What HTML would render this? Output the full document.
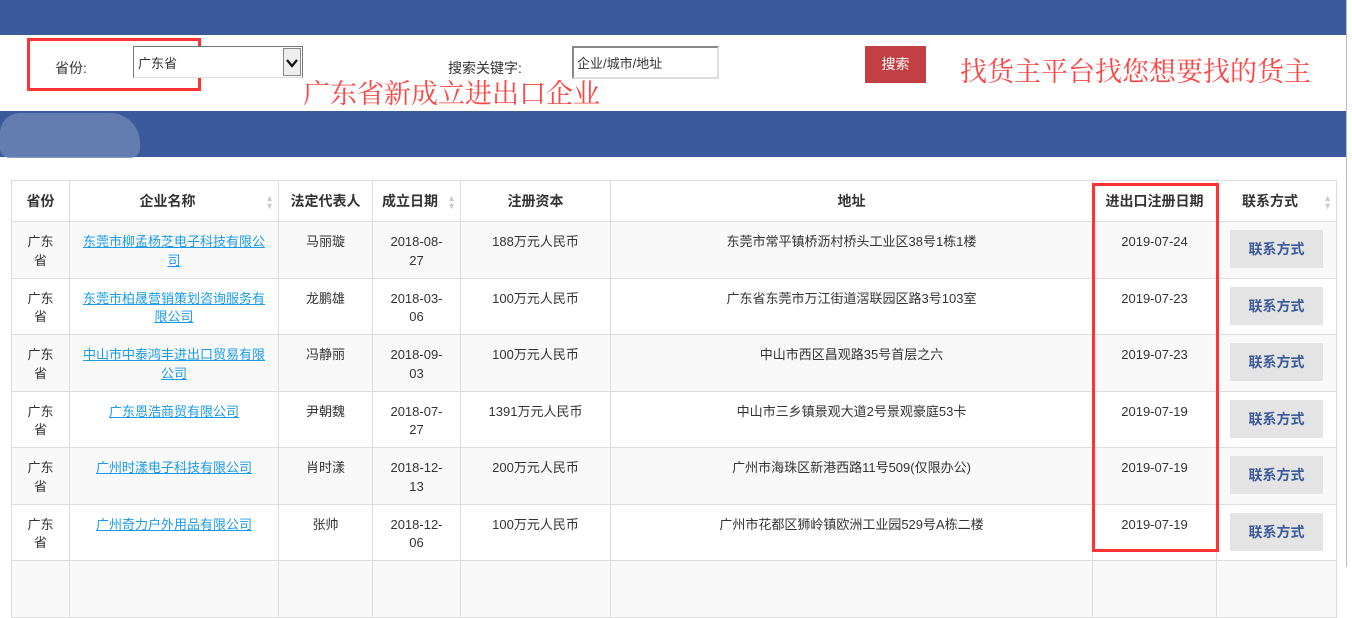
<!DOCTYPE html>
<html><head><meta charset="utf-8"><style>
*{margin:0;padding:0;box-sizing:border-box}
body{width:1352px;height:567px;overflow:hidden;background:#fff;font-family:"Liberation Sans","Noto Sans CJK SC",sans-serif;font-size:13px;color:#333;position:relative}
.abs{position:absolute}
.top{left:0;top:0;width:1346px;height:35px;background:#3b5a9c}
.bar2{left:0;top:111px;width:1346px;height:46px;background:#3b5a9c}
.sb{left:1346px;top:0;width:6px;height:567px;background:#fff;border-left:1px solid #bbb}
table{position:absolute;left:11px;top:180px;width:1325px;border-collapse:collapse;table-layout:fixed}
td,th{border:1px solid #ddd;text-align:center;vertical-align:top;line-height:18.5px}
th{height:41px;vertical-align:middle;font-weight:bold;font-size:14px;color:#333}
td{height:56.5px;padding-top:11px}
td.n{padding-left:10px;padding-right:10px}
tr.o td{background:#f9f9f9}
a{color:#1a9be6;text-decoration:underline}
.btn{display:inline-block;width:93px;height:38px;line-height:38px;background:#e4e4e4;color:#3b5a9c;font-weight:bold;font-size:14px}
td.b{padding-top:8px}
.s{color:#ccc;font-size:9px;float:right;line-height:8px;margin-top:2px;margin-right:4px}
.red{font-size:27px;color:#f44;font-family:'Noto Serif CJK SC',serif;line-height:32px}
</style></head><body>
<div class="abs top"></div>
<div class="abs sb"></div>
<div class="abs" style="left:27px;top:38px;width:174px;height:53px;border:3px solid #f33"></div>
<div class="abs" style="left:55px;top:58px;font-size:14px">省份:</div>
<div class="abs" style="left:133px;top:46px;width:170px;height:32px;border:1px solid #777;border-bottom-color:#ddd;background:#fff"><span style="position:absolute;left:4px;top:6px;font-size:13px">广东省</span><span style="position:absolute;right:1px;top:1px;width:18px;height:28px;background:#eee;border:1px solid #888;text-align:center"><svg width="14" height="10" style="margin-top:9px"><path d="M2 2 L7 8 L12 2" stroke="#111" stroke-width="2.2" fill="none"/></svg></span></div>
<div class="abs" style="left:448px;top:58px;font-size:14px">搜索关键字:</div>
<div class="abs" style="left:572px;top:46px;width:147px;height:33px;border:2px solid #888;border-right-color:#ddd;border-bottom-color:#ddd;padding:5px 3px;font-size:13px">企业/城市/地址</div>
<div class="abs" style="left:865px;top:46px;width:61px;height:37px;background:#c24044;color:#fff;text-align:center;line-height:37px;font-size:14px">搜索</div>
<div class="abs red" style="left:303px;top:76px">广东省新成立进出口企业</div>
<div class="abs red" style="left:960px;top:54px">找货主平台找您想要找的货主</div>
<div class="abs bar2"></div>
<div class="abs" style="left:0;top:113px;width:140px;height:45px;background:#6f86b6;border-radius:20px 30px 10px 10px;opacity:.8"></div>
<table>
<colgroup><col style="width:58px"><col style="width:209px"><col style="width:94px"><col style="width:88px"><col style="width:150px"><col style="width:482px"><col style="width:124px"><col style="width:120px"></colgroup>
<tr><th>省份</th><th>企业名称<span class="s">▲<br>▼</span></th><th>法定代表人</th><th>成立日期<span class="s">▲<br>▼</span></th><th>注册资本</th><th>地址</th><th>进出口注册日期</th><th>联系方式<span class="s">▲<br>▼</span></th></tr>
<tr class="o"><td>广东<br>省</td><td class="n"><a>东莞市柳孟杨芝电子科技有限公司</a></td><td>马丽璇</td><td>2018-08-<br>27</td><td>188万元人民币</td><td>东莞市常平镇桥沥村桥头工业区38号1栋1楼</td><td>2019-07-24</td><td class="b"><span class="btn">联系方式</span></td></tr>
<tr><td>广东<br>省</td><td class="n"><a>东莞市柏晟营销策划咨询服务有限公司</a></td><td>龙鹏雄</td><td>2018-03-<br>06</td><td>100万元人民币</td><td>广东省东莞市万江街道滘联园区路3号103室</td><td>2019-07-23</td><td class="b"><span class="btn">联系方式</span></td></tr>
<tr class="o"><td>广东<br>省</td><td class="n"><a>中山市中泰鸿丰进出口贸易有限公司</a></td><td>冯静丽</td><td>2018-09-<br>03</td><td>100万元人民币</td><td>中山市西区昌观路35号首层之六</td><td>2019-07-23</td><td class="b"><span class="btn">联系方式</span></td></tr>
<tr><td>广东<br>省</td><td class="n"><a>广东恩浩商贸有限公司</a></td><td>尹朝魏</td><td>2018-07-<br>27</td><td>1391万元人民币</td><td>中山市三乡镇景观大道2号景观豪庭53卡</td><td>2019-07-19</td><td class="b"><span class="btn">联系方式</span></td></tr>
<tr class="o"><td>广东<br>省</td><td class="n"><a>广州时漾电子科技有限公司</a></td><td>肖时漾</td><td>2018-12-<br>13</td><td>200万元人民币</td><td>广州市海珠区新港西路11号509(仅限办公)</td><td>2019-07-19</td><td class="b"><span class="btn">联系方式</span></td></tr>
<tr><td>广东<br>省</td><td class="n"><a>广州奇力户外用品有限公司</a></td><td>张帅</td><td>2018-12-<br>06</td><td>100万元人民币</td><td>广州市花都区狮岭镇欧洲工业园529号A栋二楼</td><td>2019-07-19</td><td class="b"><span class="btn">联系方式</span></td></tr>
<tr class="o"><td></td><td></td><td></td><td></td><td></td><td></td><td></td><td></td></tr>
</table>
<div class="abs" style="left:1092px;top:183px;width:127px;height:369px;border:3px solid #f33"></div>
</body></html>
